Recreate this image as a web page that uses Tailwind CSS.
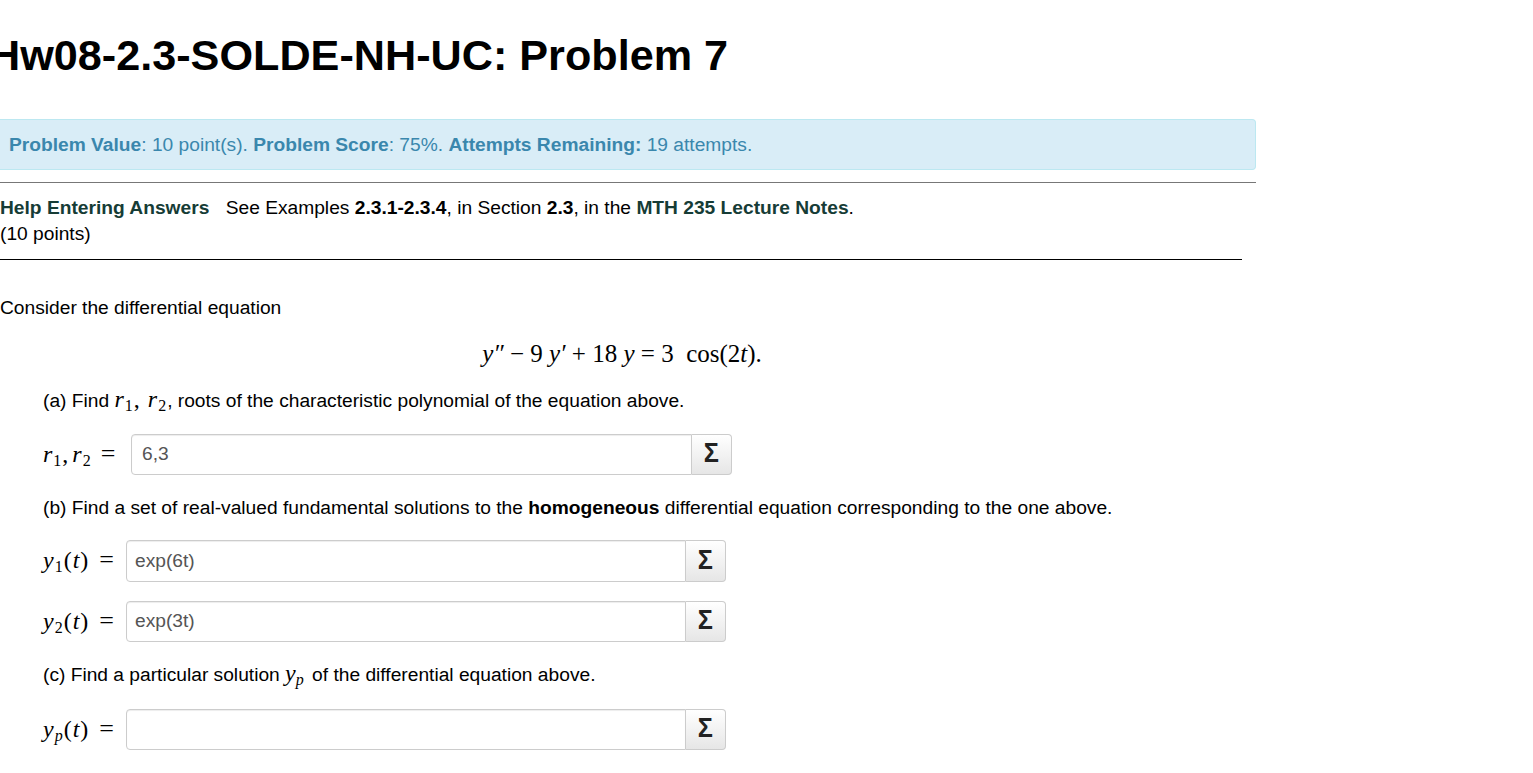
<!DOCTYPE html>
<html lang="en">
<head>
    <meta charset="UTF-8">
    <meta name="viewport" content="width=device-width, initial-scale=1.0">
    <title>Hw08-2.3-SOLDE-NH-UC: Problem 7</title>
    <script src="https://cdn.jsdelivr.net/npm/@tailwindcss/browser@4"></script>
</head>

<body class="bg-white overflow-hidden font-['Liberation_Sans',sans-serif] text-black text-[19.2px]">
    <div class="w-[1256px] h-[773px] overflow-hidden">
        <h1 class="h-[119px] pt-[27px] -ml-[11px] text-[43.2px] leading-[56px] font-bold whitespace-nowrap">Hw08-2.3-SOLDE-NH-UC: Problem 7</h1>

        <div class="h-[51px] flex items-center pt-[1px] pl-[9px] bg-[#d9edf7] border border-l-0 border-[#bce8f1] rounded-r-[4px] text-[#3a87ad]">
            <p><b>Problem Value</b>: 10 point(s). <b>Problem Score</b>: 75%. <b>Attempts Remaining:</b> 19 attempts.</p>
        </div>

        <div class="mt-3 border-t border-[#777]"></div>

        <div class="w-[1242px] h-[77px] pt-[11px] border-b border-black leading-[26px]">
            <p class="leading-[27px]"><b class="text-[#163c36] mr-[11px]">Help Entering Answers</b> See Examples <b>2.3.1-2.3.4</b>, in Section <b>2.3</b>, in the <b class="text-[#163c36]">MTH 235 Lecture Notes</b>.</p>
            <p>(10 points)</p>
        </div>

        <p class="mt-[34px] leading-[27px]">Consider the differential equation</p>

        <p class="w-[1244px] mt-[19px] h-[27px] text-center font-['Liberation_Serif',serif] text-[25px] leading-[27px]"><i>y″</i> − 9 <i>y′</i> + 18 <i>y</i> = 3 &nbsp;cos(2<i>t</i>).</p>

        <p class="mt-[19px] ml-[43px] leading-[27px]">(a) Find <span class="font-['Liberation_Serif',serif] text-[24px] tracking-[1px]"><i>r</i><sub class="text-base">1</sub>, <i>r</i><sub class="text-base">2</sub></span>, roots of the characteristic polynomial of the equation above.</p>

        <div class="mt-[20px] ml-[43px] h-[41px] flex items-center">
            <span class="w-[88px] font-['Liberation_Serif',serif] text-[24px] tracking-[1px] -mt-[3px]"><i>r</i><sub class="text-base">1</sub>,<i class="ml-[3px]">r</i><sub class="text-base">2</sub><span class="ml-[9px] text-[26px]">=</span></span>
            <div class="w-[601px] h-[41px] flex">
                <div class="flex-1 pl-[10px] flex items-center bg-white border border-[#ccc] rounded-l-[4px] text-[#555] shadow-[inset_0_1px_1px_rgba(0,0,0,0.075)]">6,3</div>
                <div class="w-[40px] flex items-center justify-center pb-[3px] bg-gradient-to-b from-white to-[#e6e6e6] border border-l-0 border-[#ccc] rounded-r-[4px] text-[#222] text-[28px] font-bold"><span class="scale-x-[0.9]">Σ</span></div>
            </div>
        </div>

        <p class="mt-[19px] ml-[43px] leading-[27px]">(b) Find a set of real-valued fundamental solutions to the <b>homogeneous</b> differential equation corresponding to the one above.</p>

        <div class="mt-[19px] ml-[43px] h-[42px] flex items-center">
            <span class="w-[83px] font-['Liberation_Serif',serif] text-[24px] tracking-[1px] -mt-[3px]"><i>y</i><sub class="text-base">1</sub>(<i>t</i>)<span class="ml-[10px] text-[26px]">=</span></span>
            <div class="w-[600px] h-[42px] flex">
                <div class="flex-1 pl-2 flex items-center bg-white border border-[#ccc] rounded-l-[4px] text-[#555] shadow-[inset_0_1px_1px_rgba(0,0,0,0.075)]">exp(6t)</div>
                <div class="w-[40px] flex items-center justify-center pb-[3px] bg-gradient-to-b from-white to-[#e6e6e6] border border-l-0 border-[#ccc] rounded-r-[4px] text-[#222] text-[28px] font-bold"><span class="scale-x-[0.9]">Σ</span></div>
            </div>
        </div>

        <div class="mt-[19px] ml-[43px] h-[41px] flex items-center">
            <span class="w-[83px] font-['Liberation_Serif',serif] text-[24px] tracking-[1px] -mt-[3px]"><i>y</i><sub class="text-base">2</sub>(<i>t</i>)<span class="ml-[10px] text-[26px]">=</span></span>
            <div class="w-[600px] h-[41px] flex">
                <div class="flex-1 pl-2 flex items-center bg-white border border-[#ccc] rounded-l-[4px] text-[#555] shadow-[inset_0_1px_1px_rgba(0,0,0,0.075)]">exp(3t)</div>
                <div class="w-[40px] flex items-center justify-center pb-[3px] bg-gradient-to-b from-white to-[#e6e6e6] border border-l-0 border-[#ccc] rounded-r-[4px] text-[#222] text-[28px] font-bold"><span class="scale-x-[0.9]">Σ</span></div>
            </div>
        </div>

        <p class="mt-[18px] ml-[43px] leading-[27px]">(c) Find a particular solution <span class="font-['Liberation_Serif',serif] text-[24px] mr-[3px]"><i>y</i><sub class="italic text-base">p</sub></span> of the differential equation above.</p>

        <div class="mt-[21px] ml-[43px] h-[41px] flex items-center">
            <span class="w-[83px] font-['Liberation_Serif',serif] text-[24px] tracking-[1px] -mt-[3px]"><i>y</i><sub class="italic text-base">p</sub>(<i>t</i>)<span class="ml-[10px] text-[26px]">=</span></span>
            <div class="w-[600px] h-[41px] flex">
                <div class="flex-1 bg-white border border-[#ccc] rounded-l-[4px] shadow-[inset_0_1px_1px_rgba(0,0,0,0.075)]"></div>
                <div class="w-[40px] flex items-center justify-center pb-[3px] bg-gradient-to-b from-white to-[#e6e6e6] border border-l-0 border-[#ccc] rounded-r-[4px] text-[#222] text-[28px] font-bold"><span class="scale-x-[0.9]">Σ</span></div>
            </div>
        </div>
    </div>
</body>
</html>
